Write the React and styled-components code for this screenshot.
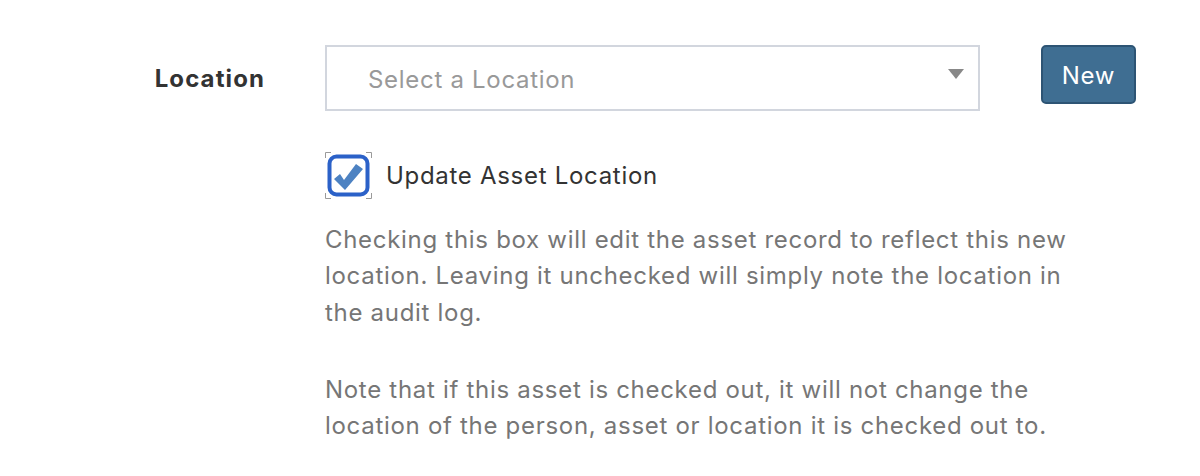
import React, { useState } from 'react';
import styled, { createGlobalStyle } from 'styled-components';

const GlobalStyle = createGlobalStyle`
  body {
    margin: 0;
    background: #ffffff;
    font-family: Inter, "Liberation Sans", sans-serif;
    letter-spacing: 0.7px;
  }
`;

const Page = styled.div`
  padding-top: 45px;
`;

const FormRow = styled.div`
  display: flex;
  align-items: flex-start;
`;

const Label = styled.label`
  width: 265px;
  flex-shrink: 0;
  text-align: right;
  font-size: 24px;
  font-weight: 700;
  letter-spacing: 1.1px;
  color: #333333;
  line-height: 68px;
`;

const Field = styled.div`
  margin-left: 60px;
  width: 655px;
`;

const Select = styled.div`
  box-sizing: border-box;
  height: 66px;
  border: 2px solid #d2d6de;
  display: flex;
  align-items: center;
  justify-content: space-between;
  padding: 2px 14px 0 41px;
  font-size: 24px;
  color: #999999;
  cursor: pointer;
`;

const Caret = styled.span`
  width: 0;
  height: 0;
  border-left: 8px solid transparent;
  border-right: 8px solid transparent;
  border-top: 10px solid #888888;
  margin-top: -10px;
`;

const NewButton = styled.button`
  margin-left: 61px;
  width: 95px;
  height: 59px;
  padding-top: 2px;
  background: #3f6e92;
  border: 2px solid #2d5474;
  border-radius: 5px;
  color: #ffffff;
  font-family: inherit;
  letter-spacing: inherit;
  font-size: 24px;
  cursor: pointer;
`;

const CheckRow = styled.label`
  display: flex;
  align-items: center;
  gap: 14px;
  margin-top: 41px;
  font-size: 24px;
  color: #333333;
  cursor: pointer;
`;

const BoxFrame = styled.span`
  display: block;
  width: 47px;
  height: 47px;
`;

const Help = styled.p`
  margin: 23px 0 0;
  font-size: 24px;
  line-height: 36.3px;
  color: #767676;
  width: 760px;
  & + & {
    margin-top: 41px;
  }
`;

const CheckBox = ({ checked }) => (
  <BoxFrame>
    <svg width="47" height="47" viewBox="0 0 47 47">
      <g stroke="#9a9a9a" strokeWidth="1" fill="none">
        <path d="M0.5 6 V0.5 H6" />
        <path d="M41 0.5 H46.5 V6" />
        <path d="M46.5 41 V46.5 H41" />
        <path d="M6 46.5 H0.5 V41" />
      </g>
      <rect x="4.5" y="4.5" width="38" height="38" rx="7" fill="#ffffff" stroke="#2b61c8" strokeWidth="4" />
      {checked && (
        <path d="M9 27 L15 22 L19 28 L31 12 L38 17 L20 38 Z" fill="#4d82c2" />
      )}
    </svg>
  </BoxFrame>
);

export default function App() {
  const [checked, setChecked] = useState(true);

  return (
    <>
      <GlobalStyle />
      <Page>
        <FormRow>
          <Label>Location</Label>
          <Field>
            <Select>
              <span>Select a Location</span>
              <Caret />
            </Select>
            <CheckRow onClick={() => setChecked(!checked)}>
              <CheckBox checked={checked} />
              Update Asset Location
            </CheckRow>
            <Help>
              Checking this box will edit the asset record to reflect this new
              location. Leaving it unchecked will simply note the location in
              the audit log.
            </Help>
            <Help>
              Note that if this asset is checked out, it will not change the
              location of the person, asset or location it is checked out to.
            </Help>
          </Field>
          <NewButton>New</NewButton>
        </FormRow>
      </Page>
    </>
  );
}
